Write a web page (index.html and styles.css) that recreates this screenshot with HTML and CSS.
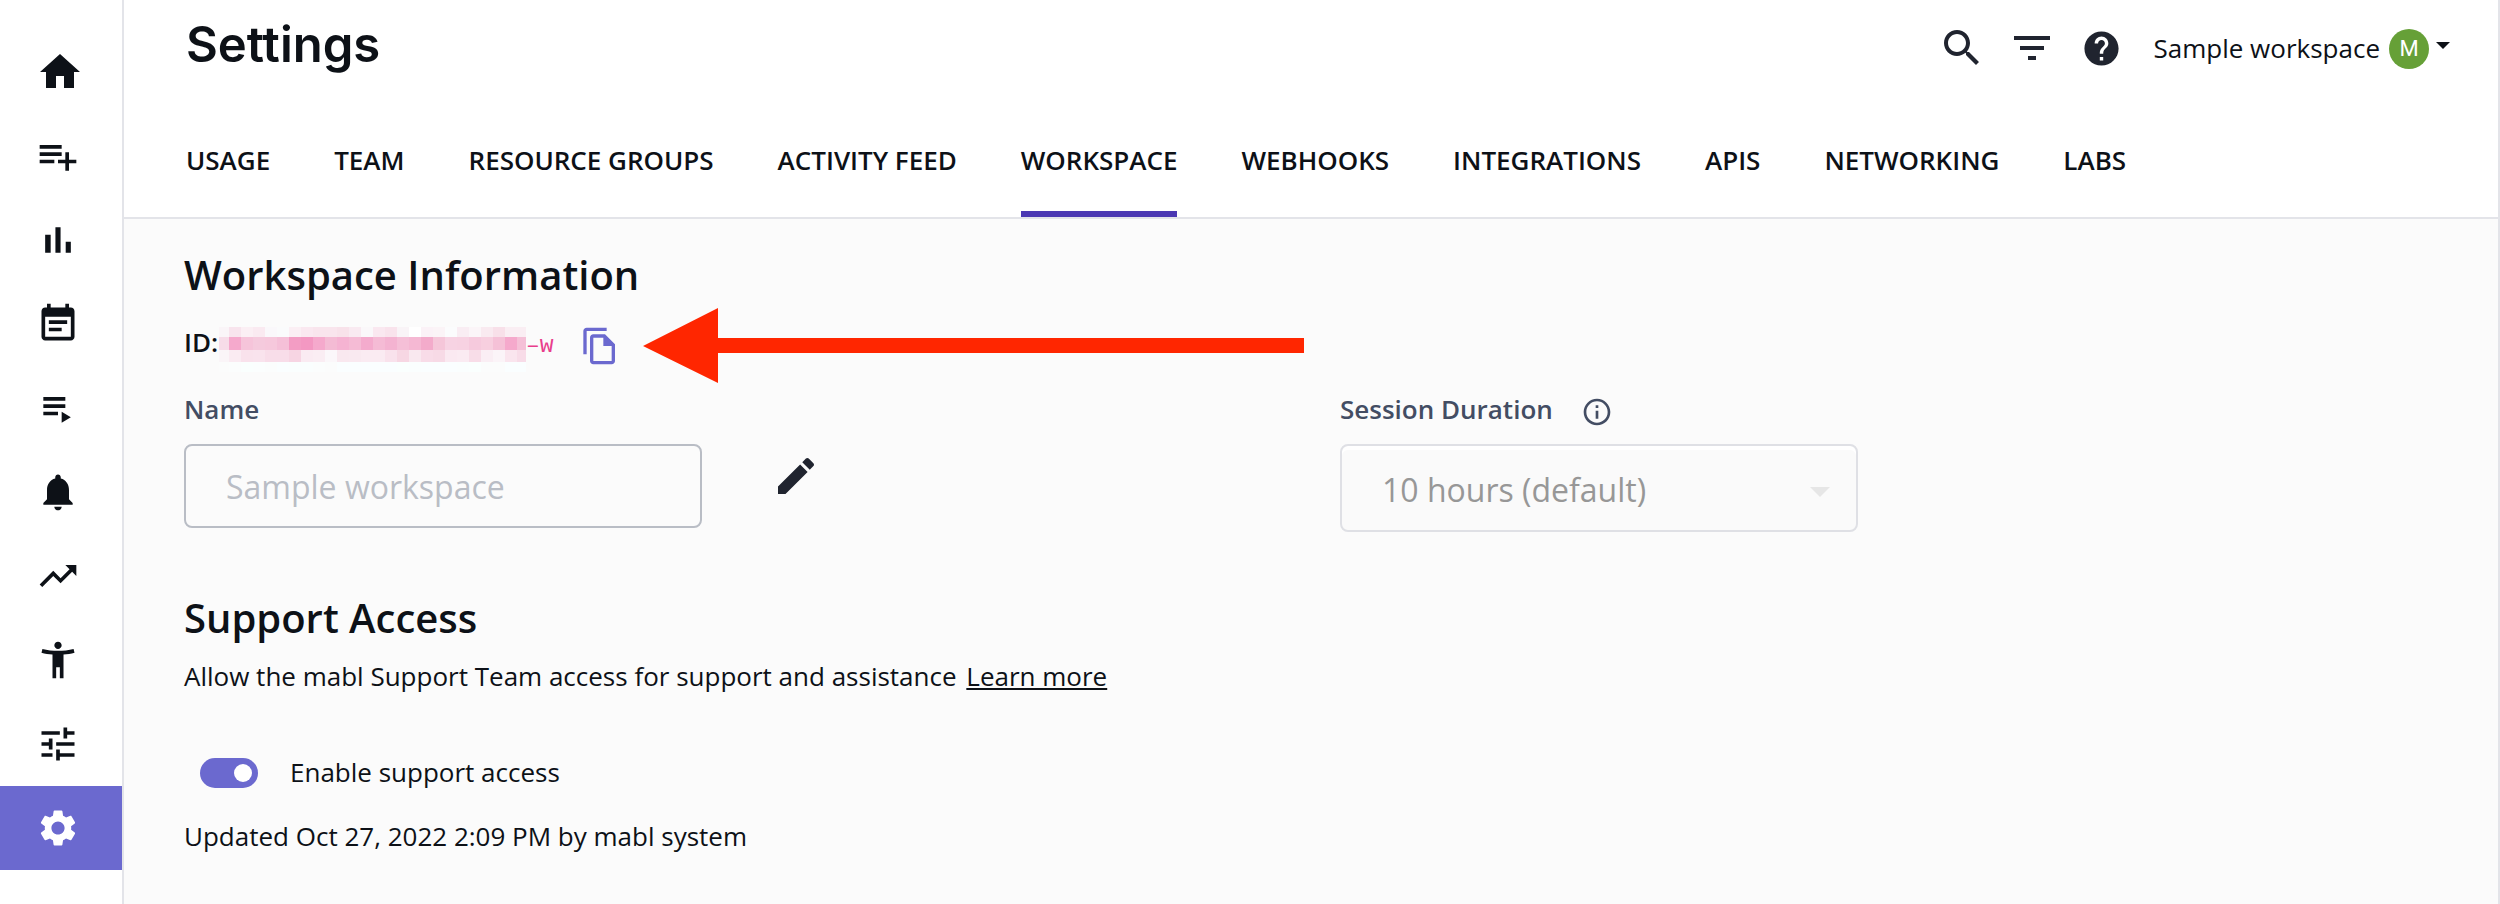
FILE: index.html
```html
<!DOCTYPE html>
<html lang="en">
<head>
  <meta charset="UTF-8">
  <title>Settings</title>
  <link rel="stylesheet" href="styles.css">
</head>
<body>
  <nav class="sidebar">
    <a class="nav-item home"><svg viewBox="0 0 24 24"><path d="M10 20v-6h4v6h5v-8h3L12 3 2 12h3v8z"/></svg></a>
    <a class="nav-item"><svg viewBox="0 0 24 24"><path d="M14 10H2v2h12v-2zm0-4H2v2h12V6zm4 8v-4h-2v4h-4v2h4v4h2v-4h4v-2h-4zM2 16h8v-2H2v2z"/></svg></a>
    <a class="nav-item"><svg viewBox="0 0 24 24"><path d="M5 9.2h3V19H5zM10.6 5h2.8v14h-2.8zm5.6 8H19v6h-2.8z"/></svg></a>
    <a class="nav-item"><svg viewBox="0 0 24 24"><path d="M19 3h-1V1h-2v2H8V1H6v2H5c-1.11 0-2 .9-2 2v14c0 1.1.89 2 2 2h14c1.1 0 2-.9 2-2V5c0-1.1-.9-2-2-2zm0 16H5V8h14v11zM17 10H7v2h10v-2zm-3 4H7v2h7v-2z"/></svg></a>
    <a class="nav-item"><svg viewBox="0 0 24 24"><path d="M4 10h12v2H4zm0-4h12v2H4zm0 8h8v2H4zm10 0v6l5-3z"/></svg></a>
    <a class="nav-item"><svg viewBox="0 0 24 24"><path d="M12 22c1.1 0 2-.9 2-2h-4c0 1.1.89 2 2 2zm6-6v-5c0-3.07-1.64-5.64-4.5-6.32V4c0-.83-.67-1.5-1.5-1.5s-1.5.67-1.5 1.5v.68C7.63 5.36 6 7.92 6 11v5l-2 2v1h16v-1l-2-2z"/></svg></a>
    <a class="nav-item"><svg viewBox="0 0 24 24"><path d="M16 6l2.29 2.29-4.88 4.88-4-4L2 16.59 3.41 18l6-6 4 4 6.3-6.29L22 12V6z"/></svg></a>
    <a class="nav-item"><svg viewBox="0 0 24 24"><path d="M20.5 6c-2.61.7-5.67 1-8.5 1s-5.89-.3-8.5-1L3 8c1.86.5 4 .83 6 1v13h2v-6h2v6h2V9c2-.17 4.14-.5 6-1l-.5-2zM12 6c1.1 0 2-.9 2-2s-.9-2-2-2-2 .9-2 2 .9 2 2 2z"/></svg></a>
    <a class="nav-item"><svg viewBox="0 0 24 24"><path d="M3 17v2h6v-2H3zM3 5v2h10V5H3zm10 16v-2h8v-2h-8v-2h-2v6h2zM7 9v2H3v2h4v2h2V9H7zm14 4v-2H11v2h10zm-6-4h2V7h4V5h-4V3h-2v6z"/></svg></a>
    <a class="nav-item active"><svg viewBox="0 0 24 24"><path d="M19.14 12.94c.04-.3.06-.61.06-.94 0-.32-.02-.64-.07-.94l2.03-1.58c.18-.14.23-.41.12-.61l-1.92-3.32c-.12-.22-.37-.29-.59-.22l-2.39.96c-.5-.38-1.03-.7-1.62-.94l-.36-2.54c-.04-.24-.24-.41-.48-.41h-3.84c-.24 0-.43.17-.47.41l-.36 2.54c-.59.24-1.13.57-1.62.94l-2.39-.96c-.22-.08-.47 0-.59.22L2.74 8.87c-.12.21-.08.47.12.61l2.03 1.58c-.05.3-.09.63-.09.94s.02.64.07.94l-2.03 1.58c-.18.14-.23.41-.12.61l1.92 3.32c.12.22.37.29.59.22l2.39-.96c.5.38 1.03.7 1.62.94l.36 2.54c.05.24.24.41.48.41h3.84c.24 0 .44-.17.47-.41l.36-2.54c.59-.24 1.13-.56 1.62-.94l2.39.96c.22.08.47 0 .59-.22l1.92-3.32c.12-.22.07-.47-.12-.61l-2.01-1.58zM12 15.6c-1.98 0-3.6-1.62-3.6-3.6s1.62-3.6 3.6-3.6 3.6 1.62 3.6 3.6-1.62 3.6-3.6 3.6z"/></svg></a>
  </nav>

  <div class="page">
    <header class="header">
      <div class="topbar">
        <h1>Settings</h1>
        <div class="tools">
          <svg class="tool" viewBox="0 0 24 24"><path d="M15.5 14h-.79l-.28-.27C15.41 12.59 16 11.11 16 9.5 16 5.91 13.09 3 9.5 3S3 5.91 3 9.5 5.91 16 9.5 16c1.61 0 3.09-.59 4.23-1.57l.27.28v.79l5 4.99L20.49 19l-4.99-5zm-6 0C7.01 14 5 11.99 5 9.5S7.01 5 9.5 5 14 7.01 14 9.5 11.99 14 9.5 14z"/></svg>
          <svg class="tool" viewBox="0 0 24 24"><path d="M10 18h4v-2h-4v2zM3 6v2h18V6H3zm3 7h12v-2H6v2z"/></svg>
          <svg class="tool help" viewBox="0 0 24 24"><path d="M12 2C6.48 2 2 6.48 2 12s4.48 10 10 10 10-4.48 10-10S17.52 2 12 2zm1 17h-2v-2h2v2zm2.07-7.75l-.9.92C13.45 12.9 13 13.5 13 15h-2v-.5c0-1.1.45-2.1 1.17-2.83l1.24-1.26c.37-.36.59-.86.59-1.41 0-1.1-.9-2-2-2s-2 .9-2 2H8c0-2.21 1.79-4 4-4s4 1.79 4 4c0 .88-.36 1.68-.93 2.25z"/></svg>
          <span class="account">Sample workspace</span>
          <span class="avatar">M</span>
          <span class="caret"></span>
        </div>
      </div>
      <div class="tabs">
        <a class="tab">USAGE</a>
        <a class="tab">TEAM</a>
        <a class="tab">RESOURCE GROUPS</a>
        <a class="tab">ACTIVITY FEED</a>
        <a class="tab selected">WORKSPACE</a>
        <a class="tab">WEBHOOKS</a>
        <a class="tab">INTEGRATIONS</a>
        <a class="tab">APIS</a>
        <a class="tab">NETWORKING</a>
        <a class="tab">LABS</a>
      </div>
    </header>

    <main class="content">
      <h2>Workspace Information</h2>
      <div class="id-row">
        <span class="id-label">ID:</span>
        <svg class="id-mask" id="idMask" viewBox="0 0 307 45" shape-rendering="crispEdges"></svg>
        <code class="id-end">–w</code>
        <svg class="copy" viewBox="0 0 24 24"><path d="M16 1H4c-1.1 0-2 .9-2 2v14h2V3h12V1zm-1 4H8c-1.1 0-1.99.9-1.99 2L6 21c0 1.1.89 2 1.99 2H19c1.1 0 2-.9 2-2V11l-6-6zM8 21V7h6v5h5v9H8z"/></svg>
        <svg class="arrow" viewBox="0 0 661 75"><path d="M0 38L75 0v30h586v15H75v30z"/></svg>
      </div>

      <div class="fields">
        <div class="field">
          <div class="label">Name</div>
          <div class="name-line">
            <div class="box">Sample workspace</div>
            <svg class="edit" viewBox="0 0 24 24"><path d="M3 17.25V21h3.75L17.81 9.94l-3.75-3.75L3 17.25zM20.71 7.04c.39-.39.39-1.02 0-1.41l-2.34-2.34c-.39-.39-1.02-.39-1.41 0l-1.83 1.83 3.75 3.75 1.83-1.83z"/></svg>
          </div>
        </div>
        <div class="field">
          <div class="label">Session Duration
            <svg class="info" viewBox="0 0 24 24"><path d="M11 7h2v2h-2zm0 4h2v6h-2zm1-9C6.48 2 2 6.48 2 12s4.48 10 10 10 10-4.48 10-10S17.52 2 12 2zm0 18c-4.41 0-8-3.59-8-8s3.59-8 8-8 8 3.59 8 8-3.59 8-8 8z"/></svg>
          </div>
          <div class="box select">10 hours (default)<span class="select-caret"></span></div>
        </div>
      </div>

      <h2 class="support-title">Support Access</h2>
      <p class="support-text">Allow the mabl Support Team access for support and assistance <a class="link">Learn more</a></p>
      <div class="toggle-row">
        <span class="toggle"><span class="knob"></span></span>
        <span class="toggle-label">Enable support access</span>
      </div>
      <p class="updated">Updated Oct 27, 2022 2:09 PM by mabl system</p>
    </main>
  </div>

  <script>
    // colours of the masked workspace id, one string per row of blocks
    const maskRows = [
      'faf5f8 f8e4ed fbeff4 faeaf1 faf8fb fafbfc fbeff4 fae8f0 f9e5ed f9e5ed f8e2ea f9eaf1 faf8fa fae8f0 f9e3ec f9f4f7 ffffff fbf2f7 fbf4f7 fbfcfd f9edf3 fbf5f8 f9eaf0 f8e0e9 faeef3 faeef3',
      'f7dce8 f5a9cc f6c4da f5cadd f6c8dc f5c0d8 f39dc4 f398c2 f5a9cc f4bbd4 f5b3d2 f5bbd5 f4abcd f5bbd5 f4b3d1 f5bfd7 f5b8d3 f3abcb f5c6d9 f7d3e3 f7d2e2 f6cadd f7cfdf f5c1d7 f5a9cc f5c0d7',
      'faf5f8 faebf2 f9e2ec f9e3ed f8dde9 f8dde9 f7d5e3 faebf2 faedf3 fbf7fa f9e8ef f9e9f0 faebf2 faebf2 f9e2ec f7d7e3 f9e8ef f8dce8 f7dae6 fae9f1 faebf2 f8dde8 faeef4 fbf4f8 fae5ee f8dce8',
      'fbfcfc fbfdfd fafffe fbfefe fbfdfd fafeff fafefe fafefe fbfdfd fbfcfc fafeff fafeff fafeff fafeff fafeff fafffe fafefe fafeff fafeff fafeff fafefe fafffe fbfcfc fbfcfc fafeff fafeff'
    ];
    const rowTops = [0, 10, 22.5, 34.5, 45];

    document.getElementById('idMask').innerHTML = maskRows.map((row, r) =>
      row.split(' ').map((color, c) => {
        const x = c === 0 ? 0 : 9.7 + (c - 1) * 12;
        const width = c === 0 ? 9.7 : 12;
        return `<rect x="${x}" y="${rowTops[r]}" width="${width}" height="${rowTops[r + 1] - rowTops[r]}" fill="#${color}"/>`;
      }).join('')
    ).join('');
  </script>
</body>
</html>
```
FILE: styles.css
```css
* {
  box-sizing: border-box;
}
body {
  margin: 0;
  display: flex;
  width: 2500px;
  height: 904px;
  overflow: hidden;
  font-family: 'Open Sans', sans-serif;
  font-size: 26px;
  color: #0d1117;
  background: #fff;
}
svg {
  display: block;
  flex: none;
  fill: currentColor;
}
h1, h2, p {
  margin: 0;
}

/* sidebar */
.sidebar {
  width: 124px;
  flex: none;
  padding-top: 30px;
  border-right: 2px solid #e3e4e9;
}
.nav-item {
  display: flex;
  align-items: center;
  height: 84px;
  padding-left: 36px;
}
.nav-item svg {
  width: 44px;
  height: 44px;
}
.nav-item.home svg {
  width: 48px;
  height: 48px;
}
.nav-item.active {
  background: #6b69cf;
  color: #fff;
}

/* header */
.page {
  flex: 1;
  display: flex;
  flex-direction: column;
  border-right: 2px solid #e3e4e9;
}
.header {
  height: 219px;
  background: #fff;
  border-bottom: 2px solid #e3e4e9;
}
.topbar {
  display: flex;
  justify-content: space-between;
  height: 104px;
  padding: 0 48px 0 62px;
}
h1 {
  font-family: Inter, sans-serif;
  font-size: 49px;
  font-weight: 600;
  line-height: 90px;
}
.tools {
  display: flex;
  align-items: center;
  height: 96px;
}
.tool {
  width: 48px;
  height: 48px;
  margin-right: 22px;
  color: #20242f;
}
.tool.help {
  width: 41px;
  height: 41px;
  margin: 0 32px 0 3px;
}
.account {
  line-height: 36px;
}
.avatar {
  width: 40px;
  height: 40px;
  margin: 2px 7px 0 9px;
  border-radius: 50%;
  background: #66a037;
  color: #fff;
  font-family: Roboto, sans-serif;
  font-size: 22px;
  line-height: 40px;
  text-align: center;
}
.caret {
  margin-bottom: 6px;
  border: 7px solid transparent;
  border-top-color: #0d1117;
  border-bottom: 0;
}
.tabs {
  display: flex;
  gap: 64px;
  height: 113px;
  padding-left: 62px;
}
.tab {
  height: 113px;
  line-height: 112px;
  font-weight: 600;
  white-space: nowrap;
}
.tab.selected {
  border-bottom: 6px solid #4b38b3;
}

/* content */
.content {
  flex: 1;
  padding: 28px 0 0 60px;
  background: #fbfbfb;
}
h2 {
  font-size: 40px;
  font-weight: 600;
  line-height: 56px;
}
.id-row {
  display: flex;
  align-items: center;
  height: 75px;
  margin-top: 5px;
}
.id-label {
  width: 35px;
  padding-bottom: 8px;
  font-weight: 600;
}
.id-mask {
  width: 307px;
  height: 45px;
  margin-top: 8px;
}
.id-end {
  width: 54px;
  color: #e83e8c;
  font-family: 'Liberation Mono', monospace;
  font-size: 23px;
}
.copy {
  width: 40px;
  height: 40px;
  color: #6b69cf;
}
.arrow {
  width: 661px;
  height: 75px;
  margin-left: 23px;
  color: #ff2600;
}
.fields {
  display: grid;
  grid-template-columns: 1156px 520px;
  margin-top: 6px;
}
.label {
  display: flex;
  align-items: center;
  height: 40px;
  margin-bottom: 15px;
  color: #434d63;
  font-weight: 600;
}
.info {
  width: 32px;
  height: 32px;
  margin: 6px 0 0 28px;
}
.name-line {
  display: flex;
}
.box {
  width: 518px;
  height: 84px;
  padding-left: 40px;
  border: 2px solid #b9bdc5;
  border-radius: 8px;
  color: #b9bdc5;
  font-size: 32px;
  line-height: 81px;
}
.edit {
  width: 48px;
  height: 48px;
  margin: 8px 0 0 70px;
  color: #20242f;
}
.select {
  display: flex;
  align-items: center;
  justify-content: space-between;
  height: 88px;
  padding-top: 3px;
  padding-right: 26px;
  border-color: #dfe0e5;
  background: #fafafa;
  box-shadow: inset 0 4px #fff;
  color: #979797;
}
.select-caret {
  margin-top: 4px;
  border: 10px solid transparent;
  border-top-color: #e6e6e6;
  border-bottom: 0;
}
.support-title {
  margin-top: 58px;
}
.support-text {
  margin-top: 12px;
  line-height: 36px;
}
.link {
  margin-left: 3px;
  text-decoration: underline;
  text-decoration-thickness: 2px;
  text-underline-offset: 2px;
}
.toggle-row {
  display: flex;
  align-items: center;
  height: 40px;
  margin-top: 59px;
  padding-left: 16px;
}
.toggle {
  display: flex;
  align-items: center;
  justify-content: flex-end;
  width: 58px;
  height: 30px;
  margin-right: 32px;
  padding-right: 6px;
  border-radius: 15px;
  background: #6b69cf;
}
.knob {
  width: 18px;
  height: 18px;
  border-radius: 50%;
  background: #fff;
}
.toggle-label {
  padding-bottom: 3px;
}
.updated {
  margin-top: 25px;
  line-height: 36px;
}
```
